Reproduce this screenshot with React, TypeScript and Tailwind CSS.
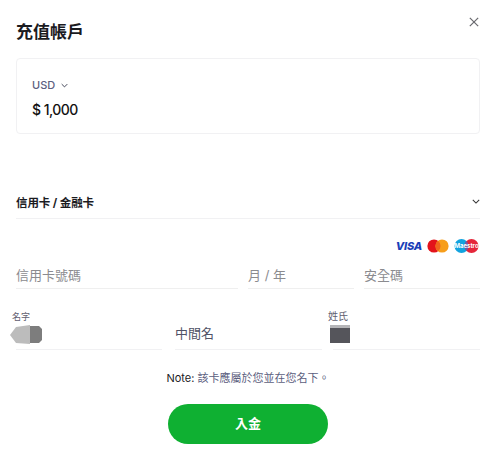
import React from "react";

function Chevron({ className }: { className: string }) {
  return (
    <svg viewBox="0 0 10 6" className={className} fill="none" stroke="currentColor" strokeWidth="1.3">
      <path d="M1 1l4 4 4-4" />
    </svg>
  );
}

function Field({ label, className }: { label: string; className: string }) {
  return (
    <div className={`h-[29px] pt-[5px] border-b border-[#efefef] text-[13px] leading-[20px] text-[#8b8b8f] ${className}`}>{label}</div>
  );
}

export default function App() {
  return (
    <div className="relative w-[500px] h-[458px] bg-white pl-4 pr-5 pt-[20px] overflow-hidden font-['Inter','Noto_Sans_CJK_TC',sans-serif]">
      <button className="absolute right-[21px] top-[17px] text-[#6b6b70]">
        <svg viewBox="0 0 12 12" className="w-[10px] h-[10px]" fill="none" stroke="currentColor" strokeWidth="1.5">
          <path d="M1 1l10 10M11 1L1 11" />
        </svg>
      </button>
      <h1 className="text-[17px] leading-[24px] font-bold text-[#1b1b1f]">充值帳戶</h1>
      <div className="mt-[14px] h-[76px] border border-[#f1f1f3] rounded-[4px] pl-[15px] pt-[18px]">
        <div className="flex items-center gap-[6px] text-[#5c6080] text-[11px] leading-[16px] font-medium">
          USD <Chevron className="w-[7px] h-[5px] text-[#33364a]" />
        </div>
        <div className="mt-[7px] text-[14px] leading-[20px] font-medium tracking-[-0.55px] text-[#111]">$ 1,000</div>
      </div>
      <div className="mt-[59px] h-[26px] pt-[2px] flex items-start justify-between border-b border-[#f1f1f3] text-[#1b1b1f]">
        <span className="text-[11.5px] leading-[17px] font-bold tracking-[-0.1px]">信用卡 / 金融卡</span>
        <Chevron className="w-[8px] h-[5px] mt-[4px] text-[#333]" />
      </div>
      <div className="mt-[21px] h-[12px] pr-[1px] flex items-center justify-end gap-[5px]">
        <span className="text-[11px] leading-[12px] font-extrabold italic text-[#1a3fb8] tracking-[-0.2px]">VISA</span>
        <svg viewBox="0 0 22 14" className="w-[22px] h-[14px]">
          <circle cx="7" cy="7" r="6.6" fill="#e3131b" />
          <circle cx="15" cy="7" r="6.6" fill="#f79e1b" />
          <path d="M11 1.8a6.6 6.6 0 0 1 0 10.4a6.6 6.6 0 0 1 0-10.4z" fill="#f0641e" />
        </svg>
        <svg viewBox="0 0 25 14" className="w-[25px] h-[14px]">
          <circle cx="7.5" cy="7" r="7" fill="#12a3df" />
          <circle cx="17.5" cy="7" r="7" fill="#e5263a" />
          <path d="M12.5 2.1a7 7 0 0 1 0 9.8a7 7 0 0 1 0-9.8z" fill="#6f5aa8" />
          <text x="12.5" y="9" textAnchor="middle" fontSize="6" fontWeight="700" fill="#ffffff" fontFamily="Inter, sans-serif">Maestro</text>
        </svg>
      </div>
      <div className="mt-[8px] flex gap-[10px]">
        <Field label="信用卡號碼" className="w-[222px]" />
        <Field label="月 / 年" className="w-[106px]" />
        <Field label="安全碼" className="w-[116px]" />
      </div>
      <div className="mt-[21px] flex">
        <div className="relative w-[146px] h-[40px] border-b border-[#f1f1f3]">
          <span className="absolute left-[-4px] top-0 text-[9px] leading-[13px] text-[#5f6070]">名字</span>
          <svg viewBox="0 0 32 19" className="absolute left-[-6px] top-[15px] w-[32px] h-[19px]">
            <path d="M0 10L6 2L20 0V19L6 18z" fill="#bcbcbc" />
            <path d="M20 1H29L32 4V15L29 18H20z" fill="#7d7d7d" />
          </svg>
        </div>
        <div className="ml-[13px] w-[147px] h-[40px] border-b border-[#f1f1f3] pt-[14px] text-[13px] leading-[18px] text-[#4f5266]">中間名</div>
        <div className="relative ml-[11px] w-[147px] h-[40px] border-b border-[#f1f1f3]">
          <span className="absolute left-[-5px] top-0 text-[10px] leading-[13px] text-[#5f6070]">姓氏</span>
          <div className="absolute left-[-3px] top-[15px] w-[20px] h-[18px] bg-[#55555b] border-t-[3px] border-[#b5b5b8]" />
        </div>
      </div>
      <p className="mt-[20px] text-center text-[11px] leading-[16px] text-[#1b1b1f]">
        Note: <span className="text-[#5c6080]">該卡應屬於您並在您名下。</span>
      </p>
      <div className="mt-[18px] flex justify-center">
        <button className="w-[160px] h-[40px] rounded-full bg-[#0fb032] text-white text-[13px] font-bold">入金</button>
      </div>
    </div>
  );
}
